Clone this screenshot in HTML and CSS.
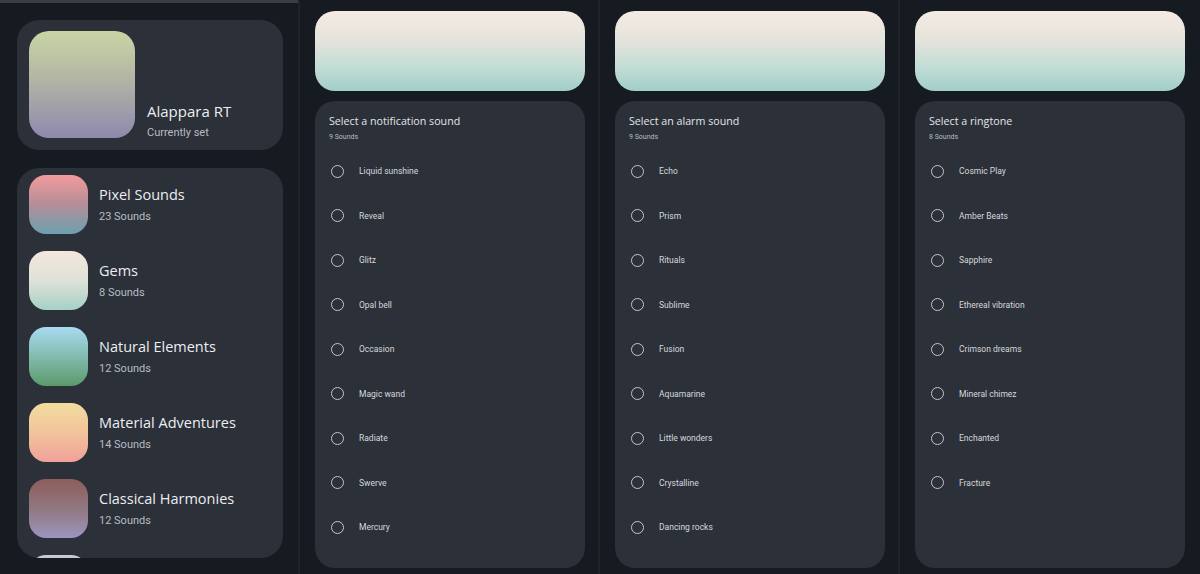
FILE: index.html
```html
<!DOCTYPE html>
<html lang="en">
<head>
<meta charset="utf-8">
<title>Sounds</title>
<link rel="stylesheet" href="styles.css">
</head>
<body>
<div class="screen">
  <section class="col col-left">
    <div class="topbar"></div>
    <div class="current card">
      <div class="current-thumb"></div>
      <div class="current-text">
        <div class="current-title">Alappara RT</div>
        <div class="current-sub">Currently set</div>
      </div>
    </div>
    <div class="collections card">
      <div class="coll"><div class="thumb t-pixel"></div><div class="coll-text"><div class="coll-title">Pixel Sounds</div><div class="coll-sub">23 Sounds</div></div></div>
      <div class="coll"><div class="thumb t-gems"></div><div class="coll-text"><div class="coll-title">Gems</div><div class="coll-sub">8 Sounds</div></div></div>
      <div class="coll"><div class="thumb t-natural"></div><div class="coll-text"><div class="coll-title">Natural Elements</div><div class="coll-sub">12 Sounds</div></div></div>
      <div class="coll"><div class="thumb t-material"></div><div class="coll-text"><div class="coll-title">Material Adventures</div><div class="coll-sub">14 Sounds</div></div></div>
      <div class="coll"><div class="thumb t-classical"></div><div class="coll-text"><div class="coll-title">Classical Harmonies</div><div class="coll-sub">12 Sounds</div></div></div>
      <div class="coll"><div class="thumb t-next"></div><div class="coll-text"><div class="coll-title">&nbsp;</div></div></div>
    </div>
  </section>

  <section class="col">
    <div class="hero"></div>
    <div class="list card">
      <div class="list-head">
        <div class="list-title">Select a notification sound</div>
        <div class="list-sub">9 Sounds</div>
      </div>
      <ul class="items">
        <li class="item"><span class="radio"></span><span class="label">Liquid sunshine</span></li>
        <li class="item"><span class="radio"></span><span class="label">Reveal</span></li>
        <li class="item"><span class="radio"></span><span class="label">Glitz</span></li>
        <li class="item"><span class="radio"></span><span class="label">Opal bell</span></li>
        <li class="item"><span class="radio"></span><span class="label">Occasion</span></li>
        <li class="item"><span class="radio"></span><span class="label">Magic wand</span></li>
        <li class="item"><span class="radio"></span><span class="label">Radiate</span></li>
        <li class="item"><span class="radio"></span><span class="label">Swerve</span></li>
        <li class="item"><span class="radio"></span><span class="label">Mercury</span></li>
      </ul>
    </div>
  </section>

  <section class="col">
    <div class="hero"></div>
    <div class="list card">
      <div class="list-head">
        <div class="list-title">Select an alarm sound</div>
        <div class="list-sub">9 Sounds</div>
      </div>
      <ul class="items">
        <li class="item"><span class="radio"></span><span class="label">Echo</span></li>
        <li class="item"><span class="radio"></span><span class="label">Prism</span></li>
        <li class="item"><span class="radio"></span><span class="label">Rituals</span></li>
        <li class="item"><span class="radio"></span><span class="label">Sublime</span></li>
        <li class="item"><span class="radio"></span><span class="label">Fusion</span></li>
        <li class="item"><span class="radio"></span><span class="label">Aquamarine</span></li>
        <li class="item"><span class="radio"></span><span class="label">Little wonders</span></li>
        <li class="item"><span class="radio"></span><span class="label">Crystalline</span></li>
        <li class="item"><span class="radio"></span><span class="label">Dancing rocks</span></li>
      </ul>
    </div>
  </section>

  <section class="col col-last">
    <div class="hero"></div>
    <div class="list card">
      <div class="list-head">
        <div class="list-title">Select a ringtone</div>
        <div class="list-sub">8 Sounds</div>
      </div>
      <ul class="items">
        <li class="item"><span class="radio"></span><span class="label">Cosmic Play</span></li>
        <li class="item"><span class="radio"></span><span class="label">Amber Beats</span></li>
        <li class="item"><span class="radio"></span><span class="label">Sapphire</span></li>
        <li class="item"><span class="radio"></span><span class="label">Ethereal vibration</span></li>
        <li class="item"><span class="radio"></span><span class="label">Crimson dreams</span></li>
        <li class="item"><span class="radio"></span><span class="label">Mineral chimez</span></li>
        <li class="item"><span class="radio"></span><span class="label">Enchanted</span></li>
        <li class="item"><span class="radio"></span><span class="label">Fracture</span></li>
      </ul>
    </div>
  </section>
</div>
</body>
</html>
```

FILE: styles.css
```css
* { box-sizing: border-box; }

html, body {
  margin: 0;
  padding: 0;
}

body {
  width: 1200px;
  height: 574px;
  overflow: hidden;
  background: #171b22;
  font-family: Roboto, "Liberation Sans", sans-serif;
  color: #e3e4e7;
}

.screen {
  display: flex;
  height: 574px;
}

.col {
  width: 300px;
  flex: none;
  display: flex;
  flex-direction: column;
  padding: 11px 13px 0 15px;
  border-right: 2px solid #1f242b;
  background: #161a21;
}

.col-last {
  border-right: none;
  padding-right: 15px;
}

.col-left {
  padding: 0 15px 0 17px;
  background: #161a21;
}

.topbar {
  height: 3px;
  margin: 0 -15px 0 -17px;
  background: #3a3f47;
}

.card {
  background: #2b3039;
  border-radius: 22px;
}

/* Current ringtone card */
.current {
  margin-top: 17px;
  height: 130px;
  display: flex;
  align-items: flex-end;
  gap: 12px;
  padding: 11px 12px 9px 12px;
}

.current-thumb {
  width: 106px;
  height: 107px;
  flex: none;
  border-radius: 20px;
  background: linear-gradient(180deg, #c9d5a5 0%, #b2b5a4 45%, #8e89ae 100%);
  align-self: flex-start;
}

.current-title {
  font-family: "Open Sans", Roboto, sans-serif;
  font-size: 15px;
  line-height: 22px;
  color: #eceef1;
}

.current-sub {
  font-size: 11px;
  line-height: 16px;
  margin-top: 3px;
  color: #b9bcc2;
}

/* Collections card */
.collections {
  margin-top: 18px;
  height: 390px;
  overflow: hidden;
  padding: 7px 12px 0 12px;
  display: flex;
  flex-direction: column;
  gap: 17px;
}

.coll {
  display: flex;
  align-items: center;
  gap: 11px;
  height: 59px;
  flex: none;
}

.thumb {
  width: 59px;
  height: 59px;
  flex: none;
  border-radius: 17px;
}

.t-pixel { background: linear-gradient(180deg, #f39a9c 0%, #b48e98 50%, #6ca0b0 100%); }
.t-gems { background: linear-gradient(180deg, #f4e7dd 0%, #dfe1d8 50%, #a5d1c7 100%); }
.t-natural { background: linear-gradient(180deg, #a9daf2 0%, #7fb8a8 55%, #5b9a6a 100%); }
.t-material { background: linear-gradient(180deg, #f2dd9f 0%, #f2c19b 55%, #f0a199 100%); }
.t-classical { background: linear-gradient(180deg, #8d5d5b 0%, #917780 50%, #9c95c0 100%); }
.t-next { background: linear-gradient(180deg, #c9cbd0 0%, #9aa0a8 100%); }

.coll-text {
  display: flex;
  flex-direction: column;
}

.coll-title {
  font-family: "Open Sans", Roboto, sans-serif;
  font-size: 14.5px;
  line-height: 20px;
  color: #eceef1;
}

.coll-sub {
  font-size: 11px;
  line-height: 15px;
  margin-top: 4px;
  color: #b9bcc2;
}

/* Right columns */
.hero {
  height: 80px;
  flex: none;
  border-radius: 20px;
  background: linear-gradient(180deg, #f4ebe3 0%, #e6e4dc 35%, #c2ddd6 70%, #a2cec8 100%);
}

.list {
  margin-top: 10px;
  height: 467px;
  border-radius: 20px;
  flex: none;
}

.list-head {
  padding: 13px 14px 0 14px;
  height: 48px;
}

.list-title {
  font-family: "Open Sans", Roboto, sans-serif;
  font-size: 10.7px;
  line-height: 14px;
  color: #e3e5e8;
  font-weight: 500;
}

.list-sub {
  font-size: 7px;
  line-height: 10px;
  margin-top: 4px;
  color: #b9bcc2;
}

.items {
  list-style: none;
  margin: 0;
  padding: 0 0 0 15.5px;
}

.item {
  height: 44.5px;
  display: flex;
  align-items: center;
  gap: 15.5px;
}

.radio {
  width: 13px;
  height: 13px;
  flex: none;
  border: 1.5px solid #c3c6cb;
  border-radius: 50%;
}

.label {
  font-size: 8.5px;
  line-height: 10px;
  color: #d6d8dc;
}
```
